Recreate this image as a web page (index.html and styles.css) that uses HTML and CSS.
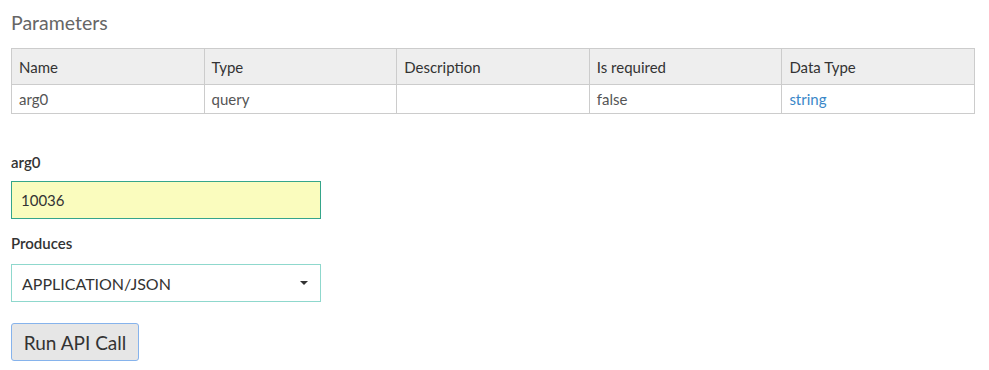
FILE: index.html
```html
<!DOCTYPE html>
<html>
<head>
<meta charset="utf-8">
<link rel="stylesheet" href="styles.css">
</head>
<body>
<div class="page">
  <h3 class="title">Parameters</h3>
  <table class="params">
    <thead>
      <tr><th>Name</th><th>Type</th><th>Description</th><th>Is required</th><th>Data Type</th></tr>
    </thead>
    <tbody>
      <tr><td>arg0</td><td>query</td><td></td><td>false</td><td><span class="link">string</span></td></tr>
    </tbody>
  </table>
  <div class="form">
    <label class="lbl">arg0</label>
    <div class="input">10036</div>
    <label class="lbl">Produces</label>
    <div class="select"><span>APPLICATION/JSON</span><span class="caret"></span></div>
    <button class="btn">Run API Call</button>
  </div>
</div>
</body>
</html>
```
FILE: styles.css
```css
html, body { margin: 0; padding: 0; background: #fff; }
body { font-family: Lato, "Open Sans", "Liberation Sans", sans-serif; color: #333; }
.page { padding: 11px 15px 0 11px; }
.title { margin: 0; font-size: 19.5px; font-weight: 400; color: #666; line-height: 24px; }
.params { margin-top: 13px; width: 964px; border-collapse: collapse; table-layout: fixed; font-size: 15px; }
.params th, .params td { border: 1px solid #ccc; text-align: left; padding: 0 7px; }
.params th { background: #eee; font-weight: 400; height: 35px; color: #333; }
.params td { height: 28px; color: #555; }
.link { color: #3a87c8; }
.form { display: flex; flex-direction: column; align-items: flex-start; padding-top: 39px; }
.lbl { font-size: 15px; font-weight: 600; color: #333; line-height: 18px; }
.input { margin-top: 10px; width: 310px; height: 38px; box-sizing: border-box; border: 1px solid #35a58a; background: #fafcbe; font-size: 15px; line-height: 36px; padding: 0 9px; color: #333; }
.input + .lbl { margin-top: 15px; }
.select { margin-top: 12px; width: 310px; height: 38px; box-sizing: border-box; border: 1px solid #8fd8cd; display: flex; align-items: center; justify-content: space-between; padding: 0 12px 0 10px; font-size: 16px; color: #333; }
.caret { width: 0; height: 0; border-left: 4px solid transparent; border-right: 4px solid transparent; border-top: 4px solid #333; }
.btn { margin-top: 21px; height: 38px; width: 128px; box-sizing: border-box; background: #e6e6e6; border: 1px solid #86b3ec; border-radius: 3px; font-family: inherit; font-size: 19px; color: #333; padding: 0; }
```
